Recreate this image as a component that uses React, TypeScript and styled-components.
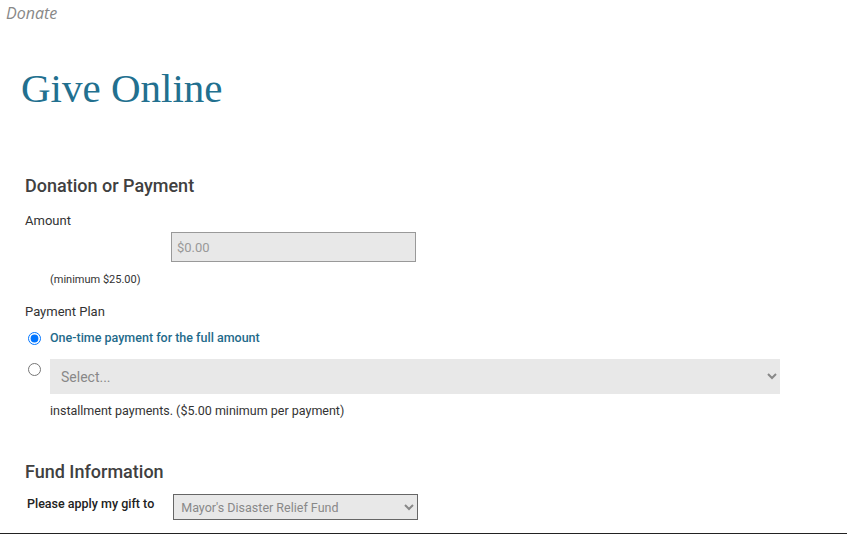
import React from "react";
import styled, { createGlobalStyle } from "styled-components";

const Global = createGlobalStyle`
  html, body { margin: 0; padding: 0; background: #fff; }
  body { font-family: Roboto, "Liberation Sans", sans-serif; color: #333; }
  * { box-sizing: border-box; }
`;

const Page = styled.div`
  width: 847px;
  display: flex;
  flex-direction: column;
`;

const Breadcrumb = styled.div`
  padding: 3px 6px 0;
  font-family: "Open Sans", sans-serif;
  font-style: italic;
  font-size: 16px;
  line-height: 20px;
  color: #888;
`;

const Title = styled.h1`
  margin: 41px 0 0 21px;
  font-family: "Liberation Serif", serif;
  font-weight: 400;
  font-size: 41px;
  line-height: 48px;
  color: #22708f;
`;

const Form = styled.form`
  display: flex;
  flex-direction: column;
  padding-left: 25px;
`;

const SectionTitle = styled.h2<{ $top: number }>`
  margin: ${(p) => p.$top}px 0 0;
  font-family: Roboto, sans-serif;
  font-weight: 500;
  font-size: 18px;
  line-height: 22px;
  color: #404040;
`;

const Label = styled.div<{ $top: number }>`
  margin-top: ${(p) => p.$top}px;
  font-size: 13px;
  line-height: 16px;
  color: #333;
`;

const AmountInput = styled.input`
  margin: 3px 0 0 146px;
  width: 245px;
  height: 30px;
  border: 1px solid #999;
  background: #e8e8e8;
  padding: 0 5px;
  font-family: Roboto, sans-serif;
  font-size: 13px;
  color: #999;
  &::placeholder { color: #999; }
`;

const Hint = styled.div`
  margin: 11px 0 0 25px;
  font-size: 11px;
  line-height: 14px;
  color: #333;
`;

const RadioRow = styled.label<{ $top: number }>`
  display: flex;
  align-items: flex-start;
  gap: 9px;
  margin-top: ${(p) => p.$top}px;
  padding-left: 3px;
`;

const Radio = styled.input<{ $offset: number }>`
  margin: ${(p) => p.$offset}px 0 0 0;
  width: 13px;
  height: 13px;
  flex: none;
`;

const RadioText = styled.span`
  font-size: 12.5px;
  line-height: 16px;
  font-weight: 500;
  color: #1f6b8b;
`;

const PlanSelect = styled.select`
  width: 730px;
  height: 35px;
  border: none;
  background-color: #e8e8e8;
  padding: 0 7px;
  font-family: Roboto, sans-serif;
  font-size: 14px;
  color: #888;
`;

const Note = styled.div`
  margin: 9px 0 0 25px;
  font-size: 12.5px;
  line-height: 16px;
  color: #333;
`;

const FundRow = styled.div`
  display: flex;
  align-items: flex-start;
  gap: 19px;
  margin-top: 11px;
  padding-left: 2px;
`;

const FundLabel = styled.span`
  margin-top: 2px;
  font-size: 12.5px;
  line-height: 16px;
  font-weight: 500;
  color: #222;
`;

const FundSelect = styled.select`
  width: 245px;
  height: 26px;
  border: 1px solid #666;
  background-color: #e8e8e8;
  padding: 0 3px;
  font-family: Roboto, sans-serif;
  font-size: 12.5px;
  color: #888;
`;

const Divider = styled.hr`
  margin: 13px 0 0;
  border: none;
  border-top: 1px solid #222;
  width: 100%;
`;

export default function App() {
  return (
    <Page>
      <Global />
      <Breadcrumb>Donate</Breadcrumb>
      <Title>Give Online</Title>
      <Form onSubmit={(e) => e.preventDefault()}>
        <SectionTitle $top={63}>Donation or Payment</SectionTitle>
        <Label $top={16}>Amount</Label>
        <AmountInput type="text" placeholder="$0.00" />
        <Hint>(minimum $25.00)</Hint>
        <Label $top={17}>Payment Plan</Label>
        <RadioRow $top={10}>
          <Radio type="radio" name="plan" defaultChecked $offset={2} />
          <RadioText>One-time payment for the full amount</RadioText>
        </RadioRow>
        <RadioRow $top={13}>
          <Radio type="radio" name="plan" $offset={4} />
          <PlanSelect defaultValue="">
            <option value="">Select...</option>
            <option value="2">2</option>
            <option value="3">3</option>
          </PlanSelect>
        </RadioRow>
        <Note>installment payments. ($5.00 minimum per payment)</Note>
        <SectionTitle $top={42}>Fund Information</SectionTitle>
        <FundRow>
          <FundLabel>Please apply my gift to</FundLabel>
          <FundSelect defaultValue="mayor">
            <option value="mayor">Mayor's Disaster Relief Fund</option>
          </FundSelect>
        </FundRow>
      </Form>
      <Divider />
    </Page>
  );
}
